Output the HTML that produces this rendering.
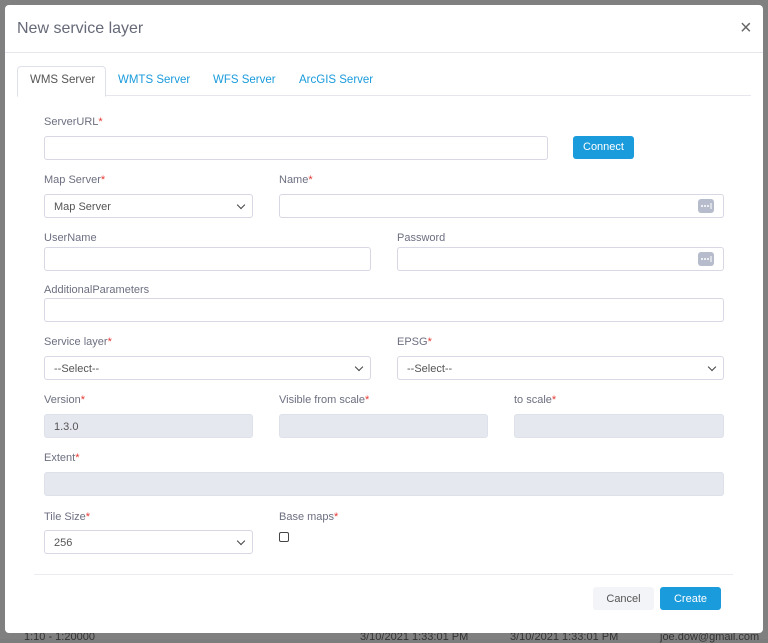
<!DOCTYPE html>
<html><head><meta charset="utf-8"><style>
*{box-sizing:border-box;margin:0;padding:0}
body{width:768px;height:639px;background:#7d7d7d;position:relative;overflow:hidden;font-family:"Liberation Sans",sans-serif;}
.bg{position:absolute;left:0;top:0;width:768px;height:639px;background:#808080}
.bgtxt{position:absolute;top:631px;font-size:11px;color:#333;white-space:nowrap}
.modal{position:absolute;left:5px;top:5px;width:758px;height:628px;background:#fff;border-radius:4px}
.a{position:absolute}
.title{left:12px;top:15px;font-size:16px;color:#666a78}
.close{left:735px;top:12px;font-size:20px;color:#666;font-weight:normal}
.hr{height:1px;background:#e6e6ef}
.tab{font-size:11.5px;color:#1a9bdb;top:69px}
.lbl{font-size:11px;color:#6c6f80}
.lbl b{color:#e53935;font-weight:normal}
.in{border:1px solid #d7d8e4;border-radius:3px;background:#fff;height:24px;font-size:11px;color:#555;padding:6px 9px}
.dis{background:#e6e8f0;border-color:#dfe1ea}
.sel::after{content:"";position:absolute;right:8px;top:7px;width:5px;height:5px;border-right:1.5px solid #444;border-bottom:1.5px solid #444;transform:rotate(45deg)}
.dots{position:absolute;right:9px;top:4px;width:16px;height:14px}
.btn{border-radius:3px;font-size:11px;text-align:center;line-height:23px;height:23px}
</style></head><body>
<div class="bg"></div>
<div class="bgtxt" style="left:24px">1:10 - 1:20000</div>
<div class="bgtxt" style="left:360px">3/10/2021 1:33:01 PM</div>
<div class="bgtxt" style="left:510px">3/10/2021 1:33:01 PM</div>
<div class="bgtxt" style="left:660px">joe.dow@gmail.com</div>
<div class="modal">
<div class="a title">New service layer</div>
<div class="a close">×</div>
<div class="a hr" style="left:0;top:47px;width:758px"></div>
<div class="a" style="left:12px;top:61px;width:89px;height:31px;border:1px solid #dfe1ea;border-bottom:1px solid #fff;border-radius:4px 4px 0 0;background:#fff;z-index:2"></div>
<div class="a tab" style="left:25px;color:#555;z-index:3">WMS Server</div>
<div class="a tab" style="left:113px">WMTS Server</div>
<div class="a tab" style="left:208px">WFS Server</div>
<div class="a tab" style="left:294px">ArcGIS Server</div>
<div class="a hr" style="left:12px;top:90px;width:734px"></div>

<div class="a lbl" style="left:39px;top:111px">ServerURL<b>*</b></div>
<div class="a in" style="left:39px;top:131px;width:504px"></div>
<div class="a btn" style="left:568px;top:131px;width:61px;background:#1a9bdb;color:#fff">Connect</div>

<div class="a lbl" style="left:39px;top:169px">Map Server<b>*</b></div>
<div class="a in sel" style="left:39px;top:189px;width:209px">Map Server</div>
<div class="a lbl" style="left:274px;top:169px">Name<b>*</b></div>
<div class="a in" style="left:274px;top:189px;width:445px"><svg class="dots" viewBox="0 0 16 14"><rect width="16" height="14" rx="3" fill="#b6bccb"/><circle cx="4" cy="7" r="1" fill="#fff"/><circle cx="7" cy="7" r="1" fill="#fff"/><circle cx="10" cy="7" r="1" fill="#fff"/><rect x="12.5" y="4" width="1" height="6" fill="#fff"/></svg></div>

<div class="a lbl" style="left:39px;top:227px">UserName</div>
<div class="a in" style="left:39px;top:242px;width:327px"></div>
<div class="a lbl" style="left:392px;top:227px">Password</div>
<div class="a in" style="left:392px;top:242px;width:327px"><svg class="dots" viewBox="0 0 16 14"><rect width="16" height="14" rx="3" fill="#b6bccb"/><circle cx="4" cy="7" r="1" fill="#fff"/><circle cx="7" cy="7" r="1" fill="#fff"/><circle cx="10" cy="7" r="1" fill="#fff"/><rect x="12.5" y="4" width="1" height="6" fill="#fff"/></svg></div>

<div class="a lbl" style="left:39px;top:279px">AdditionalParameters</div>
<div class="a in" style="left:39px;top:293px;width:680px"></div>

<div class="a lbl" style="left:39px;top:331px">Service layer<b>*</b></div>
<div class="a in sel" style="left:39px;top:351px;width:327px">--Select--</div>
<div class="a lbl" style="left:392px;top:331px">EPSG<b>*</b></div>
<div class="a in sel" style="left:392px;top:351px;width:327px">--Select--</div>

<div class="a lbl" style="left:39px;top:389px">Version<b>*</b></div>
<div class="a in dis" style="left:39px;top:409px;width:209px">1.3.0</div>
<div class="a lbl" style="left:274px;top:389px">Visible from scale<b>*</b></div>
<div class="a in dis" style="left:274px;top:409px;width:209px"></div>
<div class="a lbl" style="left:509px;top:389px">to scale<b>*</b></div>
<div class="a in dis" style="left:509px;top:409px;width:210px"></div>

<div class="a lbl" style="left:39px;top:447px">Extent<b>*</b></div>
<div class="a in dis" style="left:39px;top:467px;width:680px"></div>

<div class="a lbl" style="left:39px;top:506px">Tile Size<b>*</b></div>
<div class="a in sel" style="left:39px;top:525px;width:209px">256</div>
<div class="a lbl" style="left:274px;top:506px">Base maps<b>*</b></div>
<div class="a" style="left:274px;top:527px;width:10px;height:10px;border:1px solid #444;border-radius:2px"></div>

<div class="a hr" style="left:29px;top:569px;width:699px;background:#ebebf2"></div>
<div class="a btn" style="left:588px;top:582px;width:61px;background:#f3f4f8;color:#555;line-height:24px">Cancel</div>
<div class="a btn" style="left:655px;top:582px;width:61px;background:#1a9bdb;color:#fff;line-height:24px">Create</div>
</div>
</body></html>
